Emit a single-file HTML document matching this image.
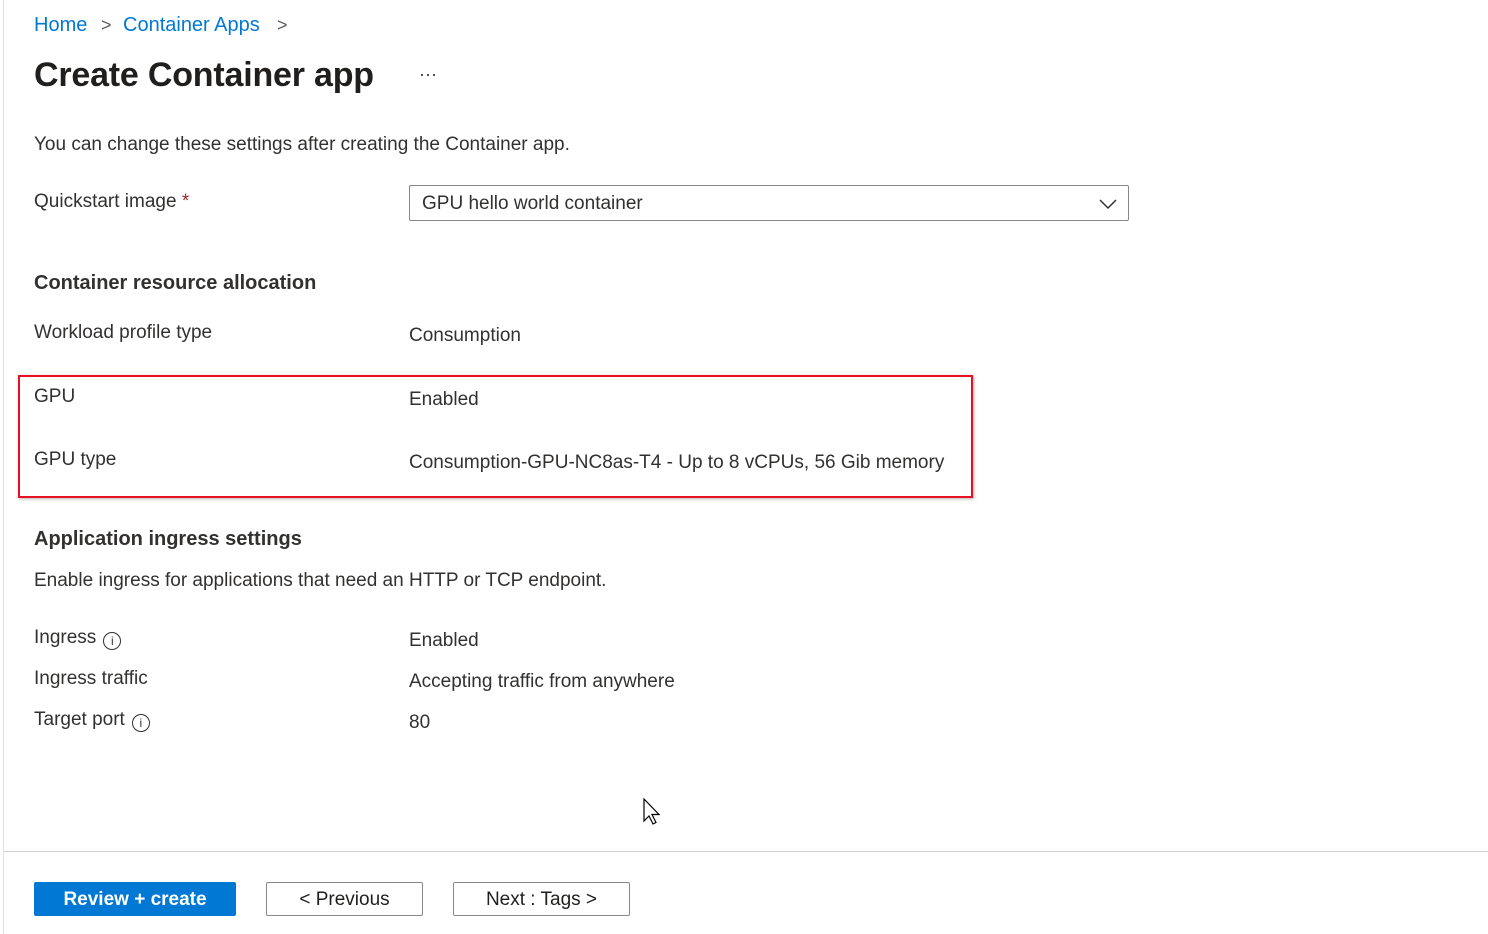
<!DOCTYPE html>
<html><head><style>
body{margin:0;width:1488px;height:934px;background:#fff;font-family:"Liberation Sans",sans-serif;color:#323130;position:relative;overflow:hidden}
.a{position:absolute;white-space:nowrap}
.t{font-size:19px}
.lnk{color:#0078d4;font-size:20px}
.chev{color:#605e5c;font-size:18px}
.btn{position:absolute;top:882px;height:34px;box-sizing:border-box;font-size:19px;display:flex;align-items:center;justify-content:center;border-radius:2px;padding-top:2px}
.info{display:inline-block;width:18px;height:18px;border:1.3px solid #323130;border-radius:50%;font-size:12px;text-align:center;vertical-align:-2px;margin-left:7px;box-sizing:border-box;line-height:16px}
</style></head><body>
<div class="a" style="left:3px;top:0;width:1px;height:934px;background:#e1dfdd"></div>
<div class="a lnk" style="left:34px;top:14px">Home</div>
<div class="a chev" style="left:101px;top:15px">&gt;</div>
<div class="a lnk" style="left:123px;top:14px">Container Apps</div>
<div class="a chev" style="left:277px;top:15px">&gt;</div>
<div class="a" style="left:34px;top:56px;font-size:34px;font-weight:bold;color:#201f1e;letter-spacing:-0.2px">Create Container app</div>
<div class="a" style="left:419px;top:64px;font-size:18px">···</div>
<div class="a t" style="left:34px;top:134px">You can change these settings after creating the Container app.</div>
<div class="a t" style="left:34px;top:191px">Quickstart image <span style="color:#a4262c">*</span></div>
<div class="a" style="left:409px;top:185px;width:720px;height:36px;box-sizing:border-box;border:1px solid #8a8886;border-radius:2px"></div>
<div class="a t" style="left:422px;top:193px">GPU hello world container</div>
<svg class="a" style="left:1099px;top:198px" width="18" height="12"><path d="M1 2l8 8 8-8" fill="none" stroke="#323130" stroke-width="1.5"/></svg>
<div class="a" style="left:34px;top:272px;font-size:20px;font-weight:bold">Container resource allocation</div>
<div class="a t" style="left:34px;top:322px">Workload profile type</div>
<div class="a t" style="left:409px;top:325px">Consumption</div>
<div class="a" style="left:18px;top:375px;width:955px;height:123px;box-sizing:border-box;border:2px solid #e81123;box-shadow:1px 1px 3px rgba(0,0,0,.3)"></div>
<div class="a t" style="left:34px;top:386px">GPU</div>
<div class="a t" style="left:409px;top:389px">Enabled</div>
<div class="a t" style="left:34px;top:449px">GPU type</div>
<div class="a t" style="left:409px;top:452px">Consumption-GPU-NC8as-T4 - Up to 8 vCPUs, 56 Gib memory</div>
<div class="a" style="left:34px;top:528px;font-size:20px;font-weight:bold">Application ingress settings</div>
<div class="a t" style="left:34px;top:570px">Enable ingress for applications that need an HTTP or TCP endpoint.</div>
<div class="a t" style="left:34px;top:627px">Ingress<span class="info">i</span></div>
<div class="a t" style="left:409px;top:630px">Enabled</div>
<div class="a t" style="left:34px;top:668px">Ingress traffic</div>
<div class="a t" style="left:409px;top:671px">Accepting traffic from anywhere</div>
<div class="a t" style="left:34px;top:709px">Target port<span class="info">i</span></div>
<div class="a t" style="left:409px;top:712px">80</div>
<svg class="a" style="left:642px;top:798px" width="20" height="28"><path d="M2 1v22l5-5 4 8 3-1.5-4-8h7z" fill="#fff" stroke="#000" stroke-width="1.2"/></svg>
<div class="a" style="left:4px;top:851px;width:1484px;height:1px;background:#d2d0ce"></div>
<div class="btn" style="left:34px;width:202px;background:#0078d4;color:#fff;font-weight:bold">Review + create</div>
<div class="btn" style="left:266px;width:157px;border:1px solid #8a8886;color:#201f1e">&lt; Previous</div>
<div class="btn" style="left:453px;width:177px;border:1px solid #8a8886;color:#201f1e">Next : Tags &gt;</div>
</body></html>
